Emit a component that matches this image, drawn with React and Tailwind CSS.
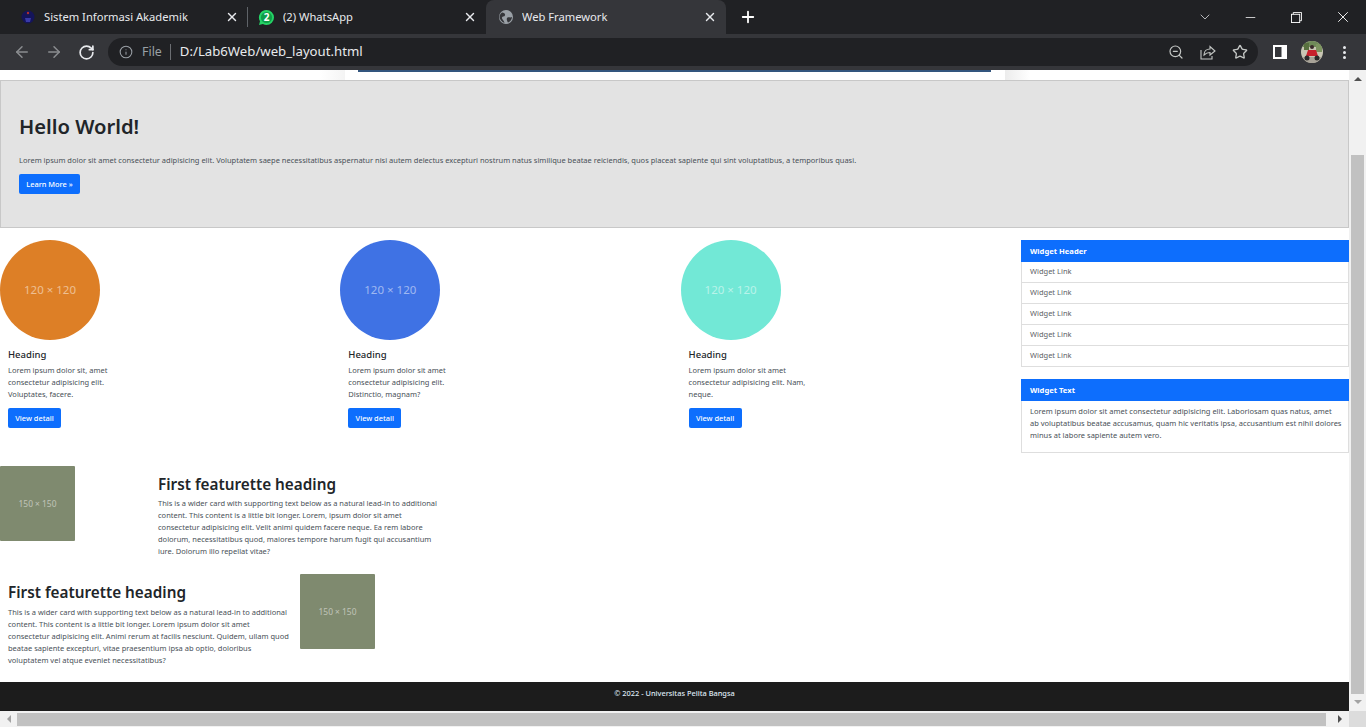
import React from "react";
import { ArrowLeft, ArrowRight, RotateCw, Info, ZoomOut, Star, X, Plus, ChevronDown, Minus } from "lucide-react";

const LOREM_HERO = "Lorem ipsum dolor sit amet consectetur adipisicing elit. Voluptatem saepe necessitatibus aspernatur nisi autem delectus excepturi nostrum natus similique beatae reiciendis, quos placeat sapiente qui sint voluptatibus, a temporibus quasi.";

function Lines({ lines }) {
  return (
    <p className="text-[7.5px] leading-[12px] text-[#495057] whitespace-nowrap">
      {lines.map((l, i) => (
        <span key={i} className="block">{l}</span>
      ))}
    </p>
  );
}

function Tab({ icon, title, active, width, pad }) {
  return (
    <div className={`flex items-center h-[34px] pl-[5px] ${pad} ${width} ${active ? "bg-[#35363a] rounded-t-lg" : ""}`}>
      {icon}
      <span className="flex-1 ml-[8px] text-[11.2px] text-[#e8eaed] whitespace-nowrap overflow-hidden">{title}</span>
      <X size={14} strokeWidth={2.4} className="text-[#e8eaed]" />
    </div>
  );
}

function Column({ color, lines }) {
  return (
    <div className="w-[340.3px] shrink-0">
      <div className={`w-[100px] h-[100px] rounded-full flex items-center justify-center text-[11.5px] text-white/50 ${color}`}>120 × 120</div>
      <div className="px-2 pt-[7px]">
        <h3 className="text-[9.5px] leading-[15px] text-[#212529] font-medium">Heading</h3>
        <div className="mt-[2px]"><Lines lines={lines} /></div>
        <button className="mt-[8px] w-[53px] h-5 pt-px rounded-[2px] bg-[#0d6efd] text-white text-[7.4px] font-medium">View detail</button>
      </div>
    </div>
  );
}

function Thumb() {
  return <div className="w-[75px] h-[75px] pt-px shrink-0 rounded-[1px] bg-[#7f8a6f] flex items-center justify-center text-[8.4px] text-white/50">150 × 150</div>;
}

function WidgetHeader({ children }) {
  return <div className="h-[22px] pt-px bg-[#0d6efd] px-[9px] flex items-center text-white text-[7.6px] font-bold">{children}</div>;
}

export default function App() {
  return (
    <div className="w-[1366px] h-[727px] flex flex-col overflow-hidden bg-white font-['Noto_Sans','Open_Sans',sans-serif]">
      {/* tab strip */}
      <div className="h-[34px] bg-[#202124] flex items-center shrink-0">
        <div className="w-[12px] shrink-0" />
        <Tab width="w-[233px]" pad="pr-[6px]" title="Sistem Informasi Akademik" icon={
          <svg width="16" height="16" viewBox="0 0 16 16" className="ml-[3px]"><circle cx="8" cy="8" r="6.5" fill="#14145a" /><path d="M8 2v4M5 9h6l-1 4H6z" fill="#3a3aa8" /><circle cx="8" cy="4" r="1.2" fill="#b03030" /></svg>
        } />
        <div className="w-px h-5 bg-[#5f6368] ml-[2px]" />
        <div className="w-[238px] shrink-0">
          <Tab width="w-full" pad="pr-[9px]" title="(2) WhatsApp" icon={
            <svg width="17" height="17" viewBox="0 0 17 17" className="ml-[5px]"><path d="M8.5 1a7.5 7.5 0 0 1 0 15c-1.3 0-2.5-.3-3.6-.9L1 16l1-3.7A7.5 7.5 0 0 1 8.5 1z" fill="#25d366" /><circle cx="8.5" cy="8.5" r="5.6" fill="#0f9d48" /><text x="8.5" y="12" textAnchor="middle" fontSize="10" fontWeight="700" fill="#fff">2</text></svg>
          } />
        </div>
        <Tab active width="w-[240px]" pad="pr-[9px]" title="Web Framework" icon={
          <svg width="16" height="16" viewBox="0 0 16 16" className="ml-[7px]"><circle cx="8" cy="8" r="7" fill="#9aa0a6" /><path d="M4 3.5c2 .5 3.5 1 3 2.8S4.5 7 4 8.5 6 11 6.5 14C4 13 1.5 10 1.5 8S3 4 4 3.5zM9.5 8.5c1.500-.5 3 .5 4.500-.5 0 2.500-2 5-4 5.500-1-1.500-2-4-.5-5z" fill="#35363a" /></svg>
        } />
        <Plus size={18} strokeWidth={2.4} className="ml-[13px] text-white" />
        <div className="flex-1" />
        <ChevronDown size={16} strokeWidth={1.2} className="text-[#dadce0] mr-[30px]" />
        <Minus size={15} strokeWidth={1.2} className="text-white mr-[33px]" />
        <svg width="11" height="11" viewBox="0 0 12 12" fill="none" stroke="#fff" className="mr-[32px]"><rect x="0.5" y="2.500" width="9" height="9" /><path d="M2.500 2.500V.5h9v9H9.500" /></svg>
        <X size={18} strokeWidth={1.2} className="text-white mr-[14px]" />
      </div>

      {/* toolbar */}
      <div className="h-[36px] bg-[#35363a] flex items-center shrink-0">
        <ArrowLeft size={18} strokeWidth={2} className="ml-[13px] text-[#8b8d90]" />
        <ArrowRight size={18} strokeWidth={2} className="ml-[14px] text-[#8b8d90]" />
        <RotateCw size={17} strokeWidth={2.4} className="ml-[15px] text-[#e8eaed]" />
        <div className="ml-[13px] w-[1150px] h-7 rounded-full bg-[#202124] flex items-center">
          <Info size={14} strokeWidth={1.8} className="ml-[11px] text-[#9aa0a6]" />
          <span className="ml-[9px] text-[12.400px] text-[#9aa0a6]">File</span>
          <div className="w-px h-4 bg-[#6b6e72] ml-[8px]" />
          <span className="ml-[9px] text-[13.200px] text-[#e8eaed]">D:/Lab6Web/web_layout.html</span>
          <div className="flex-1" />
          <ZoomOut size={16} strokeWidth={1.8} className="text-[#c4c7c5]" />
          <svg width="16" height="16" viewBox="0 0 16 16" fill="none" stroke="#c4c7c5" strokeWidth="1.100" className="ml-[16px]"><path d="M1 6v9h11v-3" /><path d="M4 11c0-4 3-6 6-6V2.500L15 7l-5 4V8.500c-2.500 0-4.500 1-6 2.500z" /></svg>
          <Star size={16} strokeWidth={2} className="ml-[16px] mr-[10px] text-[#c4c7c5]" />
        </div>
        <svg width="14" height="14" viewBox="0 0 14 14" className="ml-[15px]"><rect width="14" height="14" fill="#fff" /><rect x="2" y="2" width="6.500" height="10" fill="#35363a" /></svg>
        <svg width="22" height="22" viewBox="0 0 22 22" className="ml-[14px]">
          <defs><clipPath id="av"><circle cx="11" cy="11" r="11" /></clipPath></defs>
          <g clipPath="url(#av)">
            <rect width="22" height="22" fill="#c9c6b4" />
            <rect width="22" height="6" fill="#6f8a58" />
            <rect x="3" y="2" width="5" height="7" fill="#58703f" />
            <rect x="15" y="3" width="6" height="8" fill="#7d9460" />
            <rect y="16" width="22" height="6" fill="#a8a398" />
            <path d="M7 9h8l2 6H5z" fill="#c8202c" />
            <circle cx="11" cy="6" r="2" fill="#3a2a2a" />
            <circle cx="6" cy="17" r="2.500" fill="#2b2b2b" />
            <circle cx="16" cy="17" r="2.500" fill="#2b2b2b" />
          </g>
        </svg>
        <div className="ml-[20px] flex flex-col gap-[2px]">
          <span className="w-[3px] h-[3px] rounded-full bg-[#e8eaed]" />
          <span className="w-[3px] h-[3px] rounded-full bg-[#e8eaed]" />
          <span className="w-[3px] h-[3px] rounded-full bg-[#e8eaed]" />
        </div>
      </div>

      {/* viewport */}
      <div className="flex flex-1 min-h-0">
        <div className="w-[1349px] shrink-0 flex flex-col">
          {/* bottom of the navbar scrolled out */}
          <div className="h-[10px] flex shrink-0">
            <div className="w-[320px] bg-white" />
            <div className="w-[25px] bg-gradient-to-r from-white to-[#f4f4f4]" />
            <div className="w-[660px] bg-white pl-[13px] pr-[14px]">
              <div className="h-[2px] bg-[#33557e]" />
            </div>
            <div className="w-[25px] bg-gradient-to-r from-[#ececec] to-white" />
          </div>

          {/* hero */}
          <section className="h-[148px] shrink-0 bg-[#e3e3e3] border border-[#c8c8c8] pl-[18px] pt-[32px]">
            <h1 className="text-[20.2px] leading-[26px] font-semibold text-[#212529]">Hello World!</h1>
            <p className="mt-[15px] text-[7.5px] leading-[12px] text-[#495057] whitespace-nowrap">{LOREM_HERO}</p>
            <button className="mt-[8px] w-[61px] h-5 pt-px rounded-[2px] bg-[#0d6efd] text-white text-[7.4px] font-medium">Learn More »</button>
          </section>

          {/* body */}
          <div className="flex flex-1 min-h-0 pt-3">
            <div className="w-[1021px] shrink-0 flex flex-col">
              <div className="flex">
                <Column color="bg-[#dd7f26]" lines={["Lorem ipsum dolor sit, amet", "consectetur adipisicing elit.", "Voluptates, facere."]} />
                <Column color="bg-[#3f72e4]" lines={["Lorem ipsum dolor sit amet", "consectetur adipisicing elit.", "Distinctio, magnam?"]} />
                <Column color="bg-[#72e8d6]" lines={["Lorem ipsum dolor sit amet", "consectetur adipisicing elit. Nam,", "neque."]} />
              </div>
              <div className="flex mt-[38px]">
                <Thumb />
                <div className="ml-[83px] pt-[8px]">
                  <h2 className="text-[15.3px] leading-[20px] font-semibold text-[#212529]">First featurette heading</h2>
                  <div className="mt-[3px]">
                    <Lines lines={["This is a wider card with supporting text below as a natural lead-in to additional", "content. This content is a little bit longer. Lorem, ipsum dolor sit amet", "consectetur adipisicing elit. Velit animi quidem facere neque. Ea rem labore", "dolorum, necessitatibus quod, maiores tempore harum fugit qui accusantium", "iure. Dolorum illo repellat vitae?"]} />
                  </div>
                </div>
              </div>
              <div className="flex mt-[17px]">
                <div className="w-[300px] pl-2 pt-[8px]">
                  <h2 className="text-[15.3px] leading-[20px] font-semibold text-[#212529]">First featurette heading</h2>
                  <div className="mt-[4px]">
                    <Lines lines={["This is a wider card with supporting text below as a natural lead-in to additional", "content. This content is a little bit longer. Lorem ipsum dolor sit amet", "consectetur adipisicing elit. Animi rerum at facilis nesciunt. Quidem, ullam quod", "beatae sapiente excepturi, vitae praesentium ipsa ab optio, doloribus", "voluptatem vel atque eveniet necessitatibus?"]} />
                  </div>
                </div>
                <Thumb />
              </div>
            </div>

            <aside className="w-[328px] shrink-0">
              <WidgetHeader>Widget Header</WidgetHeader>
              <ul className="border-x border-[#dedede]">
                {[0, 1, 2, 3, 4].map((i) => (
                  <li key={i} className="h-[21px] px-2 flex items-center text-[7.5px] text-[#5c6166] border-b border-[#dedede]">Widget Link</li>
                ))}
              </ul>
              <div className="mt-3">
                <WidgetHeader>Widget Text</WidgetHeader>
                <div className="h-[52px] border-x border-b border-[#dedede] pl-2 pt-1">
                  <Lines lines={["Lorem ipsum dolor sit amet consectetur adipisicing elit. Laboriosam quas natus, amet", "ab voluptatibus beatae accusamus, quam hic veritatis ipsa, accusantium est nihil dolores", "minus at labore sapiente autem vero."]} />
                </div>
              </div>
            </aside>
          </div>

          <footer className="h-[29px] shrink-0 bg-[#1c1c1c] flex justify-center pt-[6px] text-[7.4px] leading-[10px] font-medium text-[#dfe9f5]">© 2022 - Universitas Pelita Bangsa</footer>
        </div>

        {/* vertical scrollbar */}
        <div className="w-[17px] bg-[#f1f1f1] flex flex-col items-center shrink-0 pt-[7px]">
          <div className="w-0 h-0 border-x-[4px] border-x-transparent border-b-[4px] border-b-[#505050]" />
          <div className="w-[13px] h-[539px] bg-[#c1c1c1] mt-[74px]" />
          <div className="w-0 h-0 mt-[6px] border-x-[4px] border-x-transparent border-t-[4px] border-t-[#a3a3a3]" />
        </div>
      </div>

      {/* horizontal scrollbar */}
      <div className="h-[16px] bg-[#f1f1f1] flex items-center shrink-0">
        <div className="w-[17px] flex justify-center">
          <div className="w-0 h-0 border-y-[4px] border-y-transparent border-r-[4px] border-r-[#a3a3a3]" />
        </div>
        <div className="w-[1309px] h-[13px] bg-[#c1c1c1]" />
        <div className="w-[23px] flex justify-center pl-[4px]">
          <div className="w-0 h-0 border-y-[4px] border-y-transparent border-l-[4px] border-l-[#505050]" />
        </div>
        <div className="w-[17px] h-[16px] bg-[#dcdcdc]" />
      </div>
    </div>
  );
}
